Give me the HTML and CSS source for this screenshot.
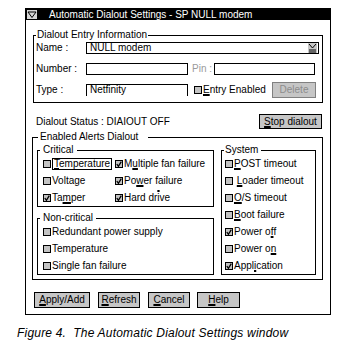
FILE: index.html
```html
<!DOCTYPE html>
<html lang="en">
  <head>
    <meta charset="UTF-8" />
    <title>Automatic Dialout Settings</title>
    <link rel="stylesheet" href="styles.css">
  </head>
  <body>
    <div class="window">
      <div class="titlebar">
        <span class="sysmenu">
          <svg width="12" height="11" viewBox="0 0 12 11">
            <rect x="0.5" y="0.5" width="11" height="10" fill="#d6d6d6" stroke="#000" />
            <path d="M2 3 H10 L6 8.5 Z" fill="none" stroke="#000" />
          </svg>
        </span>
        <span class="title">Automatic Dialout Settings - SP NULL modem</span>
      </div>

      <fieldset class="group entry">
        <legend>Dialout Entry Information</legend>
        <div class="row">
          <span class="lbl">Name :</span>
          <div class="field name-field">
            <span>NULL modem</span>
            <svg class="drop" width="9" height="10" viewBox="0 0 9 10">
              <rect x="0" y="0" width="9" height="10" fill="#c6c6c6" />
              <path d="M1 1 L4.5 5 L8 1" fill="none" stroke="#000" />
              <path d="M1 7 H8 M1 9 H8" stroke="#000" />
            </svg>
          </div>
        </div>
        <div class="row">
          <span class="lbl">Number :</span>
          <div class="field short"></div>
          <span class="pin">Pin :</span>
          <div class="field pin-field"></div>
        </div>
        <div class="row type">
          <span class="lbl">Type :</span>
          <div class="field short open">Netfinity</div>
          <span class="cb entry-cb"><span class="box"></span><u>E</u>ntry Enabled</span>
          <span class="btn delete">Delete</span>
        </div>
      </fieldset>

      <div class="status">
        <span>Dialout Status : DIAIOUT OFF</span>
        <span class="btn stop"><u>S</u>top dialout</span>
      </div>

      <fieldset class="group alerts">
        <legend>Enabled Alerts Dialout</legend>
        <div class="cols">
          <div class="leftcol">
            <fieldset class="group critical">
              <legend>Critical</legend>
              <div class="cb-grid">
                <span class="cb"><span class="box"></span><span class="focus"><u>T</u>emperature</span></span>
                <span class="cb"><span class="box on"><svg width="6" height="6" viewBox="0 0 6 6"><path d="M0.8 3 L2.4 5.3 L5.3 0.6" fill="none" stroke="#000" stroke-width="1.3" /></svg></span>M<u>u</u>ltiple fan failure</span>
                <span class="cb"><span class="box"></span>Voltage</span>
                <span class="cb"><span class="box on"><svg width="6" height="6" viewBox="0 0 6 6"><path d="M0.8 3 L2.4 5.3 L5.3 0.6" fill="none" stroke="#000" stroke-width="1.3" /></svg></span>Po<u>w</u>er failure</span>
                <span class="cb"><span class="box on"><svg width="6" height="6" viewBox="0 0 6 6"><path d="M0.8 3 L2.4 5.3 L5.3 0.6" fill="none" stroke="#000" stroke-width="1.3" /></svg></span>Ta<u>m</u>per</span>
                <span class="cb"><span class="box on"><svg width="6" height="6" viewBox="0 0 6 6"><path d="M0.8 3 L2.4 5.3 L5.3 0.6" fill="none" stroke="#000" stroke-width="1.3" /></svg></span>Hard dr<span class="ov">i</span>ve</span>
              </div>
            </fieldset>
            <fieldset class="group noncrit">
              <legend>Non-critical</legend>
              <div class="cb-list">
                <span class="cb"><span class="box"></span>Redundant power supply</span>
                <span class="cb"><span class="box"></span>Temperature</span>
                <span class="cb"><span class="box"></span>Single fan failure</span>
              </div>
            </fieldset>
          </div>
          <fieldset class="group system">
            <legend>System</legend>
            <div class="cb-list">
              <span class="cb"><span class="box"></span><u>P</u>OST timeout</span>
              <span class="cb"><span class="box"></span>&nbsp;<u>L</u>oader timeout</span>
              <span class="cb"><span class="box"></span><u>O</u>/S timeout</span>
              <span class="cb"><span class="box"></span><u>B</u>oot failure</span>
              <span class="cb"><span class="box on"><svg width="6" height="6" viewBox="0 0 6 6"><path d="M0.8 3 L2.4 5.3 L5.3 0.6" fill="none" stroke="#000" stroke-width="1.3" /></svg></span>Power o<u>f</u>f</span>
              <span class="cb"><span class="box"></span>Power o<u>n</u></span>
              <span class="cb"><span class="box on"><svg width="6" height="6" viewBox="0 0 6 6"><path d="M0.8 3 L2.4 5.3 L5.3 0.6" fill="none" stroke="#000" stroke-width="1.3" /></svg></span>Appl<u>i</u>cation</span>
            </div>
          </fieldset>
        </div>
      </fieldset>

      <div class="buttons">
        <span class="btn apply"><u>A</u>pply/Add</span>
        <span class="btn refresh"><u>R</u>efresh</span>
        <span class="btn cancel"><u>C</u>ancel</span>
        <span class="btn help"><u>H</u>elp</span>
      </div>
    </div>

    <p class="caption">Figure 4.&nbsp; The Automatic Dialout Settings window</p>
  </body>
</html>
```

FILE: styles.css
```css
* {
  box-sizing: border-box;
}
body {
  margin: 0;
  background: #fff;
  color: #000;
  font-family: "Liberation Sans", Arial, sans-serif;
  font-size: 10px;
  line-height: 12px;
}
u {
  text-decoration: underline;
  text-decoration-thickness: 2px;
  text-underline-offset: 1px;
}
.ov {
  text-decoration: overline;
  text-decoration-thickness: 2px;
}

/* window frame */
.window {
  margin: 8px 0 0 25px;
  width: 306px;
  height: 307px;
  border: 1px solid #000;
  padding: 0 7px;
}
.titlebar {
  margin: 0 -7px;
  height: 11px;
  background: #000;
  color: #fff;
  display: flex;
  align-items: center;
}
.sysmenu {
  display: flex;
  width: 12px;
  height: 11px;
  margin-right: 11px;
}
.title {
  line-height: 11px;
}

/* group boxes */
.group {
  margin: 0;
  padding: 0;
  min-width: 0;
  border: 1px solid #000;
}
.group > legend {
  padding: 0 1px;
  line-height: 10px;
}

.entry {
  margin-top: 10px;
  width: 290px;
  padding: 2px 0 4px 2px;
}
.row {
  display: flex;
  align-items: center;
  height: 12px;
}
.row + .row {
  margin-top: 9px;
}
.row.type {
  height: 16px;
  margin-top: 7px;
}
.lbl {
  width: 50px;
}
.field {
  height: 12px;
  border: 1px solid #000;
  background: #fff;
  padding-left: 3px;
  line-height: 10px;
}
.name-field {
  width: 233px;
  display: flex;
  justify-content: space-between;
  align-items: center;
  padding-right: 1px;
}
.short {
  width: 102px;
}
.open {
  border-bottom: none;
}
.pin {
  color: #9a9a9a;
  width: 22px;
  margin-left: 4px;
}
.pin-field {
  width: 101px;
}

.cb {
  display: flex;
  align-items: center;
  white-space: nowrap;
}
.box {
  width: 8px;
  height: 8px;
  border: 1px solid #000;
  background: #c3c3c3;
  margin-right: 1px;
  display: flex;
  align-items: center;
  justify-content: center;
  flex: none;
}
.entry-cb {
  margin-left: 6px;
}
.focus {
  border: 1px solid #000;
  padding: 0 1px;
  line-height: 10px;
}

.btn {
  display: flex;
  align-items: center;
  justify-content: center;
  height: 16px;
  border: 1px solid #000;
  background: #c6c6c6;
  white-space: nowrap;
}
.delete {
  width: 44px;
  margin-left: auto;
  margin-right: 6px;
  color: #8c8c8c;
  border-color: #808080;
}

.status {
  display: flex;
  align-items: center;
  justify-content: space-between;
  margin-top: 11px;
  padding: 0 1px 0 3px;
}
.stop {
  width: 63px;
  height: 15px;
}

/* alerts */
.alerts {
  margin: 3px 0 0 -1px;
  width: 291px;
  padding: 3px 6px 4px 4px;
}
.alerts > legend {
  margin-left: 1px;
  padding: 0 10px 0 2px;
}
.cols {
  display: flex;
  gap: 7px;
}
.leftcol {
  display: flex;
  flex-direction: column;
}
.critical {
  width: 177px;
  padding-left: 5px;
}
.critical > legend,
.noncrit > legend {
  margin-left: -3px;
  padding: 0 3px;
}
.cb-grid {
  display: grid;
  grid-template-columns: 72px auto;
  grid-auto-rows: 17px;
  align-items: center;
}
.noncrit {
  margin-top: 6px;
  padding-left: 5px;
}
.cb-list {
  display: grid;
  grid-auto-rows: 17px;
  align-items: center;
}
.system {
  width: 95px;
  padding-left: 3px;
}
.system > legend {
  margin-left: -1px;
  padding: 0 3px 0 1px;
}

.buttons {
  display: flex;
  margin-top: 12px;
  padding-left: 1px;
}
.apply {
  width: 56px;
  margin-right: 8px;
}
.refresh {
  width: 42px;
  margin-right: 8px;
}
.cancel {
  width: 42px;
  margin-right: 7px;
}
.help {
  width: 43px;
}

.caption {
  margin: 11px 0 0 17px;
  font-size: 12px;
  line-height: 14px;
  font-style: italic;
  letter-spacing: 0.2px;
}
```
